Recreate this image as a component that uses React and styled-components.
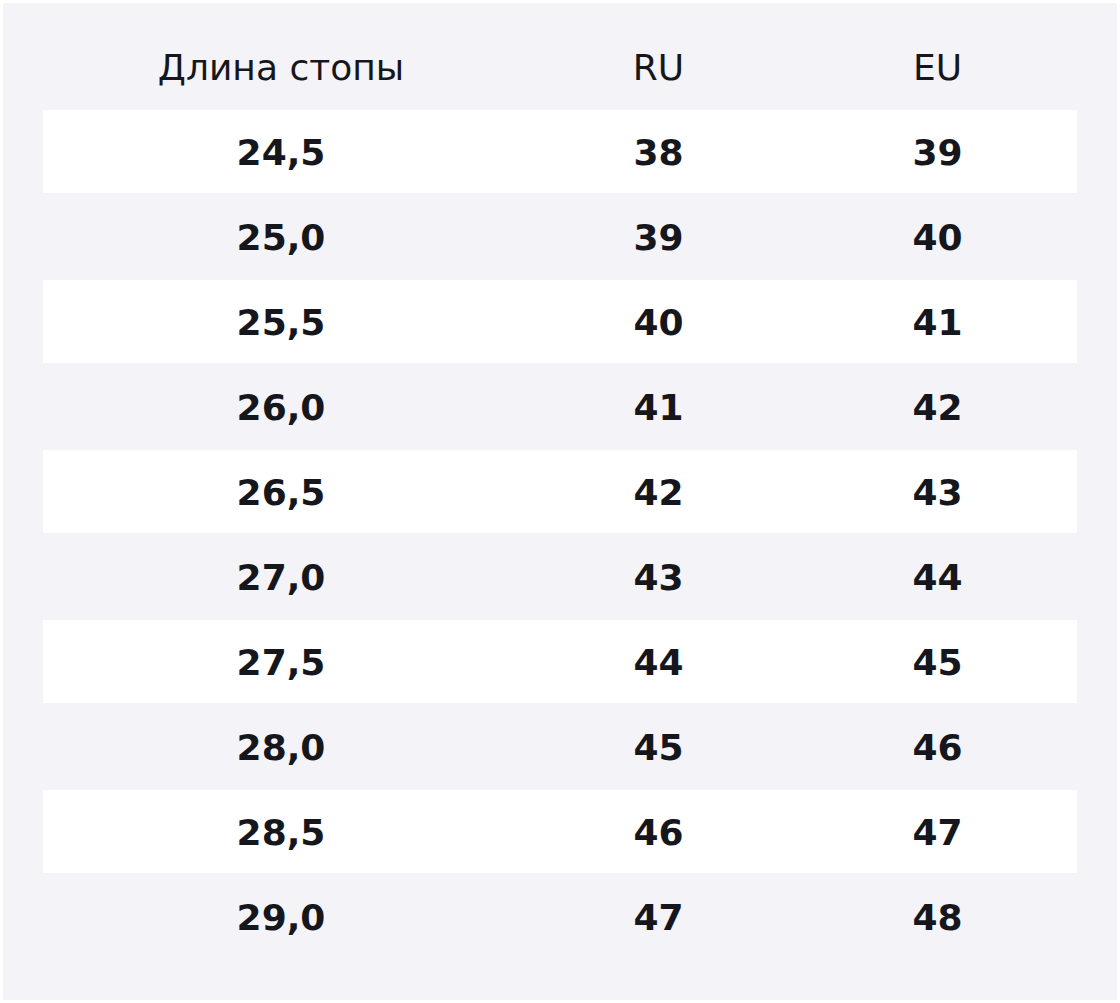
import React from 'react'
import styled, { createGlobalStyle } from 'styled-components'

const GlobalStyle = createGlobalStyle`
    html, body {
        margin: 0;
        padding: 0;
        background: #ffffff;
    }
    body {
        padding: 3px;
        font-family: "DejaVu Sans", "Noto Sans", sans-serif;
    }
`

const sizes = [
    ['24,5', '38', '39'],
    ['25,0', '39', '40'],
    ['25,5', '40', '41'],
    ['26,0', '41', '42'],
    ['26,5', '42', '43'],
    ['27,0', '43', '44'],
    ['27,5', '44', '45'],
    ['28,0', '45', '46'],
    ['28,5', '46', '47'],
    ['29,0', '47', '48'],
]

function App() {
    return (
        <>
            <GlobalStyle />
            <Wrap>
                <Table>
                    <Row>
                        <HeadCell>Длина стопы</HeadCell>
                        <HeadCell>RU</HeadCell>
                        <HeadCell>EU</HeadCell>
                    </Row>
                    {sizes.map((r, i) => (
                        <Row key={r[0]} striped={i % 2 === 0}>
                            {r.map((v, j) => (
                                <Cell key={j}>{v}</Cell>
                            ))}
                        </Row>
                    ))}
                </Table>
            </Wrap>
        </>
    )
}

export default App

const Wrap = styled.div`
    width: 1114px;
    height: 997px;
    box-sizing: border-box;
    background: #f4f4f8;
    padding: 22px 40px 40px;
`

const Table = styled.div`
    display: flex;
    flex-direction: column;
`

const Row = styled.div`
    display: grid;
    grid-template-columns: 476px 279px 279px;
    height: 85px;
    box-sizing: border-box;
    border-bottom: 2px solid #f4f4f8;
    background: ${props => (props.striped ? '#ffffff' : 'transparent')};
    align-items: center;
`

const HeadCell = styled.div`
    text-align: center;
    font-size: 36px;
    font-weight: 400;
    color: #16161d;
    padding-top: 2px;
`

const Cell = styled.div`
    text-align: center;
    font-size: 36px;
    font-weight: 700;
    color: #16161d;
    padding-top: 2px;
`
